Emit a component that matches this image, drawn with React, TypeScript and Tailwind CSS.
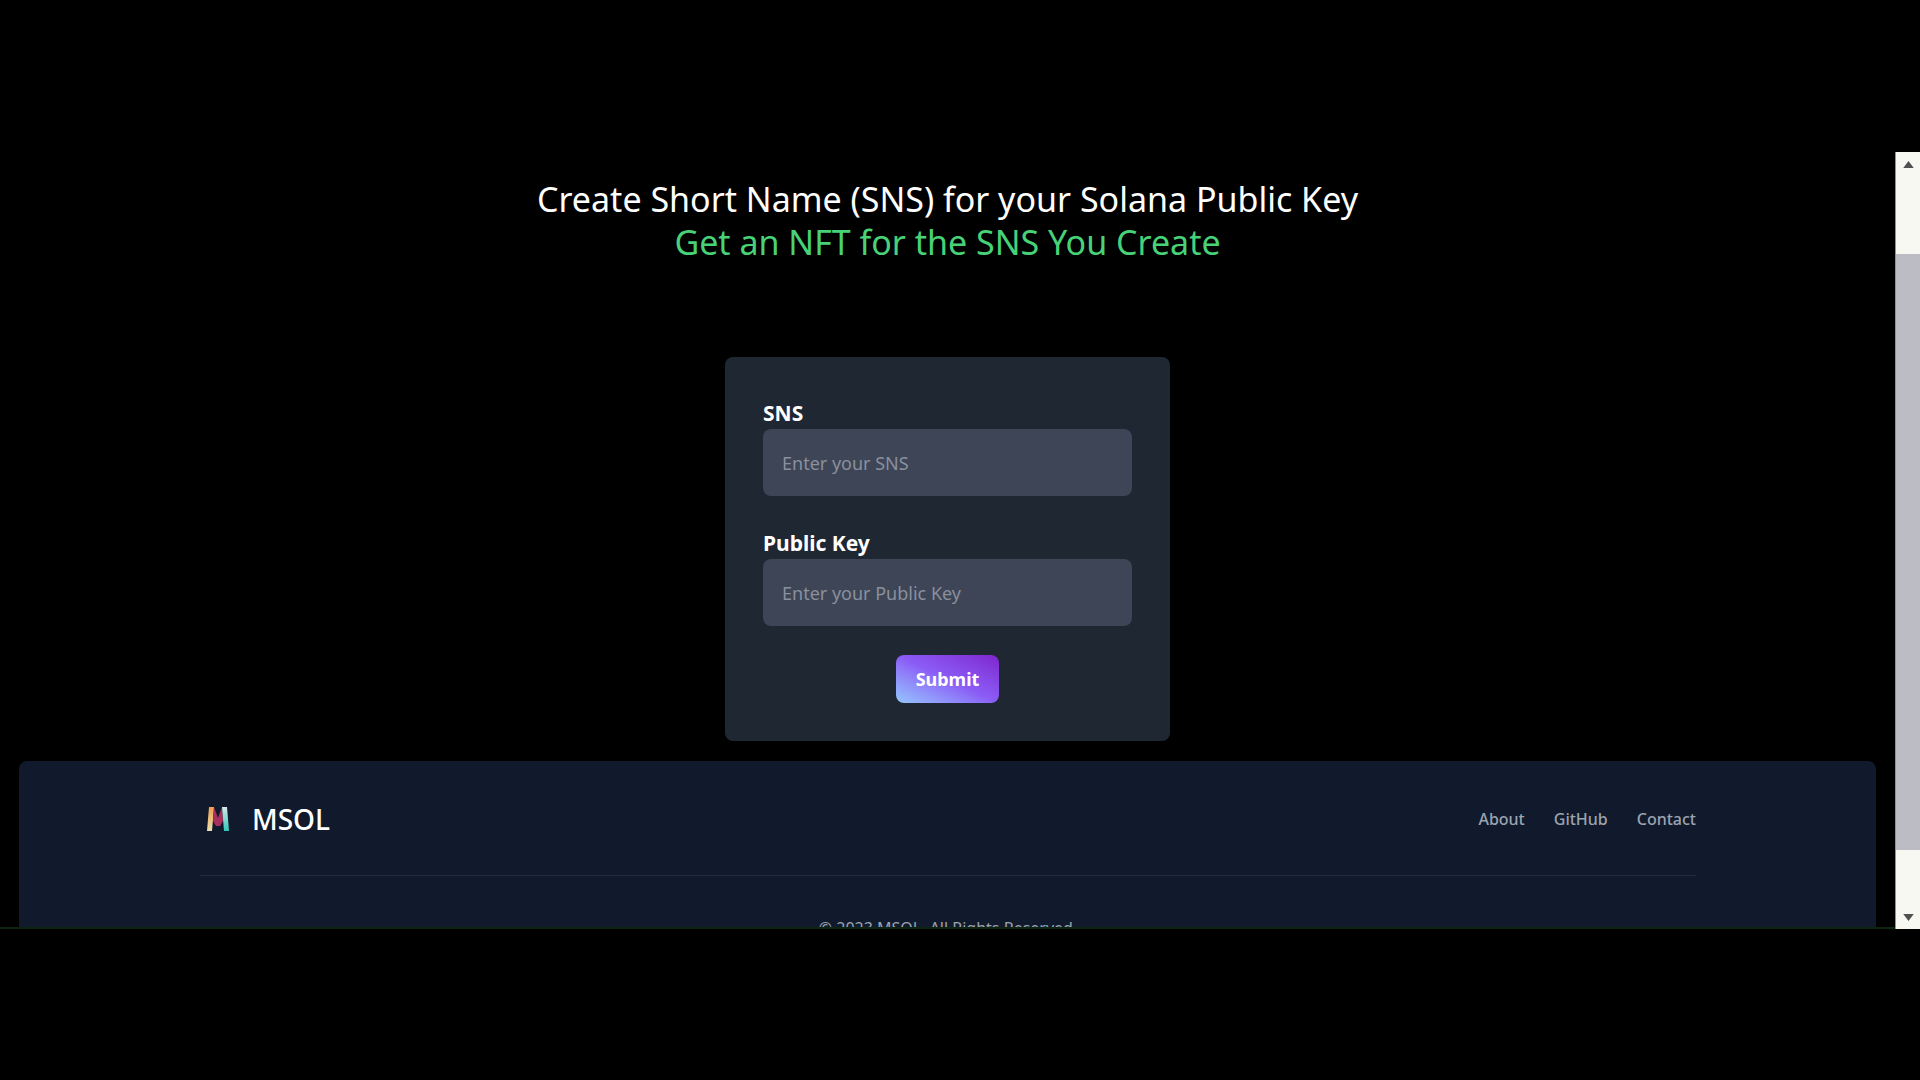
// ── SNS create page ──────────────────────────────────────────────────────────
// The window is cut off at 929px, the rest of the capture is black.

const FONT = "font-['Noto_Sans','Open_Sans',sans-serif]";

function MsolLogo() {
  return (
    <svg viewBox="0 0 24 26" className="h-[26px] w-6 shrink-0">
      <defs>
        <linearGradient id="msol-left" x1="0" y1="0" x2="0" y2="1">
          <stop offset="0" stopColor="#f0a050" />
          <stop offset="1" stopColor="#e8e0b0" />
        </linearGradient>
        <linearGradient id="msol-right" x1="0" y1="0" x2="0" y2="1">
          <stop offset="0" stopColor="#d8e8e8" />
          <stop offset="1" stopColor="#30c8b8" />
        </linearGradient>
      </defs>
      <path d="M3 1h5L6 25H1z" fill="url(#msol-left)" />
      <path d="M8 1l4 11 4-11 1 14-3 5h-4l-3-5z" fill="#a8305c" />
      <path d="M16 1h5l2 24h-5z" fill="url(#msol-right)" />
    </svg>
  );
}

function Field({ label, placeholder }: { label: string; placeholder: string }) {
  return (
    <div className="flex flex-col">
      <label className="text-[21px] leading-[30px] font-bold text-white">{label}</label>
      <input
        placeholder={placeholder}
        className="mt-[1px] h-[67px] w-full rounded-lg bg-[#3d4556] px-[19px] text-[18px] text-white outline-none placeholder:text-[#8a909c]"
      />
    </div>
  );
}

function Scrollbar() {
  return (
    <aside className="mt-[152px] flex w-[25px] shrink-0 flex-col border-l border-[#8d8fa8] bg-[#f8f8f2]">
      <div className="flex h-[24px] items-center justify-center">
        <svg viewBox="0 0 12 8" className="h-[7px] w-[11px]"><path d="M6 0l6 8H0z" fill="#505050" /></svg>
      </div>
      <div className="mt-[78px] h-[596px] bg-[#bcbcc4]" />
      <div className="mt-auto flex h-[24px] items-center justify-center">
        <svg viewBox="0 0 12 8" className="h-[7px] w-[11px]"><path d="M0 0h12L6 8z" fill="#505050" /></svg>
      </div>
    </aside>
  );
}

export default function App() {
  return (
    <div className={`h-[1080px] overflow-hidden bg-black ${FONT}`}>
      <div className="flex h-[929px]">
        <main className="flex min-w-0 flex-1 flex-col items-center overflow-hidden border-b-2 border-[#0c2410] pt-[178px]">
          <h1 className="text-center text-[34px] leading-[43px] text-white">
            Create Short Name (SNS) for your Solana Public Key
            <br />
            <span className="text-[#48d277]">Get an NFT for the SNS You Create</span>
          </h1>

          <form className="mt-[93px] flex w-[445px] flex-col rounded-lg bg-[#1f2733] px-[38px] pt-[41px] pb-[38px]">
            <Field label="SNS" placeholder="Enter your SNS" />
            <div className="mt-[32px]">
              <Field label="Public Key" placeholder="Enter your Public Key" />
            </div>
            <button
              type="button"
              className="mt-[29px] h-[48px] w-[103px] self-center rounded-lg bg-gradient-to-tr from-[#93c5fd] via-[#8b5cf6] to-[#7e22ce] text-[18px] font-bold text-white"
            >
              Submit
            </button>
          </form>

          <footer className="mt-[20px] w-[1857px] shrink-0 rounded-lg bg-[#101a2c] pt-[32px] pr-[180px] pl-[181px]">
            <div className="flex items-center justify-between pl-[6px]">
              <div className="flex items-center gap-[22px]">
                <MsolLogo />
                <span className="text-[28px] leading-[52px] font-medium text-white">MSOL</span>
              </div>
              <nav className="flex gap-[29px] text-[16px] font-medium text-[#9ca3af]">
                <a href="#">About</a>
                <a href="#">GitHub</a>
                <a href="#">Contact</a>
              </nav>
            </div>
            <hr className="mt-[30px] border-[#232c3b]" />
            <p className="mt-[40px] text-center text-[16px] leading-[24px] text-[#9ca3af]">
              © 2023 MSOL. All Rights Reserved.
            </p>
          </footer>
        </main>
        <Scrollbar />
      </div>
    </div>
  );
}
